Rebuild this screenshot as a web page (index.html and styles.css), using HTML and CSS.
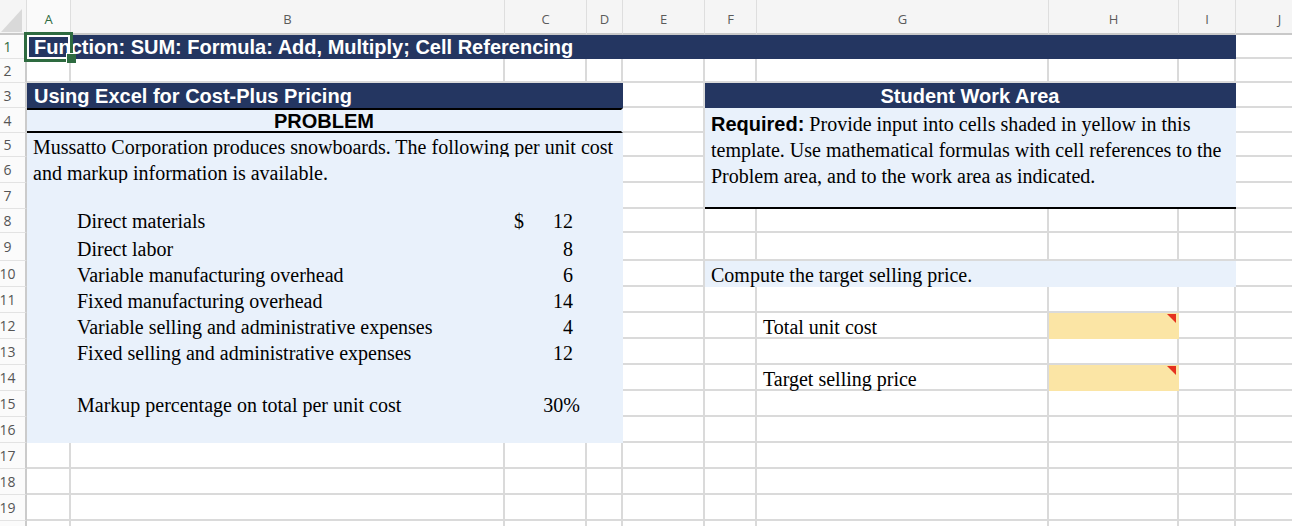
FILE: index.html
```html
<!DOCTYPE html>
<html lang="en">
<head>
<meta charset="utf-8">
<title>Cost-Plus Pricing</title>
<link rel="stylesheet" href="styles.css">
</head>
<body>
<div class="viewport">
  <div class="sheet">
    <!-- column headers -->
    <div class="ch corner"><span class="tri"></span></div>
    <div class="ch active">A</div>
    <div class="ch">B</div>
    <div class="ch">C</div>
    <div class="ch">D</div>
    <div class="ch">E</div>
    <div class="ch">F</div>
    <div class="ch">G</div>
    <div class="ch">H</div>
    <div class="ch">I</div>
    <div class="ch">J</div>

    <!-- row 1 -->
    <div class="rh active">1</div>
    <div class="c navy s9">Function: SUM: Formula: Add, Multiply; Cell Referencing</div>
    <div class="c"></div>

    <!-- row 2 -->
    <div class="rh">2</div>
    <div class="c"></div><div class="c"></div><div class="c"></div><div class="c"></div><div class="c"></div>
    <div class="c"></div><div class="c"></div><div class="c"></div><div class="c"></div><div class="c"></div>

    <!-- row 3 -->
    <div class="rh">3</div>
    <div class="c navy s4">Using Excel for Cost-Plus Pricing</div>
    <div class="c"></div>
    <div class="c navy s4 center">Student Work Area</div>
    <div class="c"></div>

    <!-- row 4 -->
    <div class="rh">4</div>
    <div class="c blue s4 problem">PROBLEM</div>
    <div class="c"></div>
    <div class="blue student"><b>Required:</b> Provide input into cells shaded in yellow in this<br>template. Use mathematical formulas with cell references to the<br>Problem area, and to the work area as indicated.</div>
    <div class="c"></div>

    <!-- row 5 -->
    <div class="rh">5</div>
    <div class="c blue s4 para">Mussatto Corporation produces snowboards. The following per unit cost</div>
    <div class="c"></div>
    <div class="c"></div>

    <!-- row 6 -->
    <div class="rh">6</div>
    <div class="c blue s4 para">and markup information is available.</div>
    <div class="c"></div>
    <div class="c"></div>

    <!-- row 7 -->
    <div class="rh">7</div>
    <div class="c blue s4"></div>
    <div class="c"></div>
    <div class="c"></div>

    <!-- row 8 -->
    <div class="rh">8</div>
    <div class="c blue"></div>
    <div class="c blue">Direct materials</div>
    <div class="c blue num dollar"><span>$</span><span>12</span></div>
    <div class="c blue"></div>
    <div class="c"></div><div class="c"></div><div class="c"></div><div class="c"></div><div class="c"></div><div class="c"></div>

    <!-- row 9 -->
    <div class="rh">9</div>
    <div class="c blue"></div>
    <div class="c blue">Direct labor</div>
    <div class="c blue num">8</div>
    <div class="c blue"></div>
    <div class="c"></div><div class="c"></div><div class="c"></div><div class="c"></div><div class="c"></div><div class="c"></div>

    <!-- row 10 -->
    <div class="rh">10</div>
    <div class="c blue"></div>
    <div class="c blue">Variable manufacturing overhead</div>
    <div class="c blue num">6</div>
    <div class="c blue"></div>
    <div class="c"></div>
    <div class="c blue s4">Compute the target selling price.</div>
    <div class="c"></div>

    <!-- row 11 -->
    <div class="rh">11</div>
    <div class="c blue"></div>
    <div class="c blue">Fixed manufacturing overhead</div>
    <div class="c blue num">14</div>
    <div class="c blue"></div>
    <div class="c"></div><div class="c"></div><div class="c"></div><div class="c"></div><div class="c"></div><div class="c"></div>

    <!-- row 12 -->
    <div class="rh">12</div>
    <div class="c blue"></div>
    <div class="c blue">Variable selling and administrative expenses</div>
    <div class="c blue num">4</div>
    <div class="c blue"></div>
    <div class="c"></div>
    <div class="c"></div>
    <div class="c">Total unit cost</div>
    <div class="c yellow"><span class="note"></span></div>
    <div class="c"></div>
    <div class="c"></div>

    <!-- row 13 -->
    <div class="rh">13</div>
    <div class="c blue"></div>
    <div class="c blue">Fixed selling and administrative expenses</div>
    <div class="c blue num">12</div>
    <div class="c blue"></div>
    <div class="c"></div><div class="c"></div><div class="c"></div><div class="c"></div><div class="c"></div><div class="c"></div>

    <!-- row 14 -->
    <div class="rh">14</div>
    <div class="c blue s4"></div>
    <div class="c"></div>
    <div class="c"></div>
    <div class="c">Target selling price</div>
    <div class="c yellow"><span class="note"></span></div>
    <div class="c"></div>
    <div class="c"></div>

    <!-- row 15 -->
    <div class="rh">15</div>
    <div class="c blue"></div>
    <div class="c blue">Markup percentage on total per unit cost</div>
    <div class="c blue num pct">30%</div>
    <div class="c blue"></div>
    <div class="c"></div><div class="c"></div><div class="c"></div><div class="c"></div><div class="c"></div><div class="c"></div>

    <!-- row 16 -->
    <div class="rh">16</div>
    <div class="c blue s4"></div>
    <div class="c"></div><div class="c"></div><div class="c"></div><div class="c"></div><div class="c"></div><div class="c"></div>

    <!-- row 17 -->
    <div class="rh">17</div>
    <div class="c"></div><div class="c"></div><div class="c"></div><div class="c"></div><div class="c"></div>
    <div class="c"></div><div class="c"></div><div class="c"></div><div class="c"></div><div class="c"></div>

    <!-- row 18 -->
    <div class="rh">18</div>
    <div class="c"></div><div class="c"></div><div class="c"></div><div class="c"></div><div class="c"></div>
    <div class="c"></div><div class="c"></div><div class="c"></div><div class="c"></div><div class="c"></div>

    <!-- row 19 -->
    <div class="rh">19</div>
    <div class="c"></div><div class="c"></div><div class="c"></div><div class="c"></div><div class="c"></div>
    <div class="c"></div><div class="c"></div><div class="c"></div><div class="c"></div><div class="c"></div>

    <!-- row 20 (partly visible, label scrolled out of view) -->
    <div class="rh"></div>
    <div class="c"></div><div class="c"></div><div class="c"></div><div class="c"></div><div class="c"></div>
    <div class="c"></div><div class="c"></div><div class="c"></div><div class="c"></div><div class="c"></div>

    <!-- active cell selection -->
    <div class="selection"></div>
    <div class="fill-handle"></div>
  </div>
</div>
</body>
</html>
```

FILE: styles.css
```css
html, body {
  margin: 0;
  padding: 0;
  background: #ffffff;
}

.viewport {
  width: 1292px;
  height: 526px;
  overflow: hidden;
}

.sheet {
  position: relative;
  width: 1324px;
  display: grid;
  grid-template-columns: 27px 44px 434px 82px 36px 82px 52px 292px 130px 57px 88px;
  grid-template-rows: 35px 24px 24px 25px 25px 24px 26px 26px 24px 28px repeat(11, 26px);
}

/* column headers */
.ch {
  box-sizing: border-box;
  background: #f5f5f5;
  border-right: 1px solid #dedede;
  border-bottom: 2px solid #c9c9c9;
  display: flex;
  align-items: center;
  justify-content: center;
  padding-top: 5px;
  font-family: "Open Sans", "Liberation Sans", sans-serif;
  font-size: 13px;
  color: #5b5b5b;
}

.ch.active {
  background: #fafafa;
  color: #2e6b40;
}

.ch.corner {
  position: relative;
  padding: 0;
}

.tri {
  position: absolute;
  left: 1px;
  top: 9px;
  width: 21px;
  height: 23px;
  background: #d9d9d9;
  clip-path: polygon(100% 0, 100% 100%, 0 100%);
}

/* row headers */
.rh {
  box-sizing: border-box;
  background: #fbfbfb;
  border-right: 2px solid #cbcbcb;
  border-bottom: 1px solid #e3e3e3;
  display: flex;
  align-items: center;
  justify-content: center;
  padding-right: 10px;
  font-family: "Open Sans", "Liberation Sans", sans-serif;
  font-size: 14px;
  color: #555555;
  white-space: nowrap;
}

.rh.active {
  color: #2e6b40;
}

/* cells */
.c {
  box-sizing: border-box;
  min-width: 0;
  border-right: 2px solid #dadada;
  border-bottom: 2px solid #dadada;
  display: flex;
  align-items: flex-end;
  padding: 0 6px 0 6px;
  line-height: 1;
  white-space: nowrap;
  font-family: "Liberation Serif", "Times New Roman", serif;
  font-size: 20px;
  color: #000000;
}

.para {
  line-height: 0.8;
}

.s2 { grid-column: span 2; }
.s4 { grid-column: span 4; }
.s9 { grid-column: span 9; }

.navy {
  background: #243661;
  border-color: transparent;
  color: #ffffff;
  font-family: "Liberation Sans", Arial, sans-serif;
  font-weight: bold;
  font-size: 20px;
  padding-left: 7px;
  padding-bottom: 0;
}

.center {
  justify-content: center;
}

.blue {
  background: #e9f1fb;
  border-color: transparent;
}

.yellow {
  position: relative;
  background: #fbe5a5;
  border-color: transparent;
}

.note {
  position: absolute;
  top: 1px;
  right: 1px;
  width: 9px;
  height: 9px;
  background: #e5321f;
  clip-path: polygon(0 0, 100% 0, 100% 100%);
}

.problem {
  justify-content: center;
  border-top: 2px solid #000000;
  border-bottom: 2px solid #000000;
  padding-bottom: 0;
  font-family: "Liberation Sans", Arial, sans-serif;
  font-weight: bold;
  font-size: 20px;
}

.student {
  box-sizing: border-box;
  grid-column: span 4;
  grid-row: span 4;
  border-bottom: 2px solid #000000;
  padding: 3px 6px 0 6px;
  font-family: "Liberation Serif", "Times New Roman", serif;
  font-size: 20px;
  line-height: 26px;
  color: #000000;
  white-space: nowrap;
}

.student b {
  font-family: "Liberation Sans", Arial, sans-serif;
  font-size: 20px;
}

.num {
  justify-content: flex-end;
  padding-right: 12px;
}

.num.dollar {
  justify-content: space-between;
  padding-left: 9px;
}

.num.pct {
  padding-right: 5px;
}

/* selection overlay on A1 */
.selection {
  position: absolute;
  left: 24px;
  top: 32px;
  width: 49px;
  height: 30px;
  box-sizing: border-box;
  border: 3px solid #2e6b40;
  box-shadow: inset 0 0 0 2px #ffffff;
}

.fill-handle {
  position: absolute;
  left: 66px;
  top: 53px;
  width: 10px;
  height: 10px;
  box-sizing: border-box;
  background: #2e6b40;
  border-left: 1px solid #ffffff;
  border-top: 1px solid #ffffff;
}
```
